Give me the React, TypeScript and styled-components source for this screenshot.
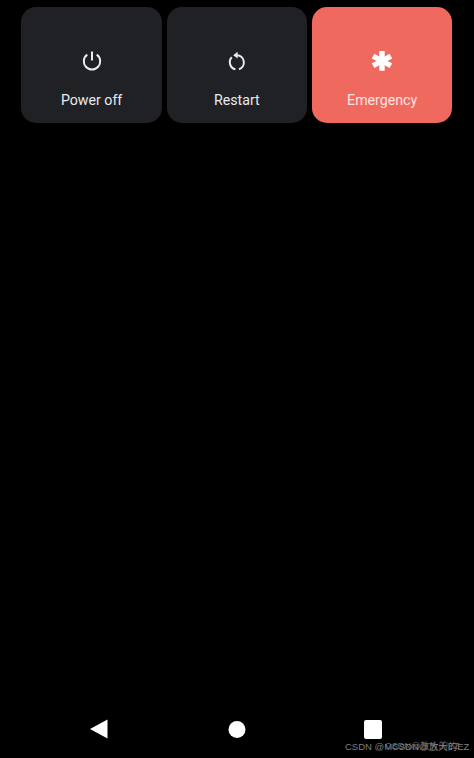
import React from "react";
import styled, { createGlobalStyle } from "styled-components";

const GlobalStyle = createGlobalStyle`
  html, body {
    margin: 0;
    padding: 0;
    background: #000;
  }
`;

const Screen = styled.div`
  position: relative;
  width: 474px;
  height: 758px;
  display: flex;
  flex-direction: column;
  justify-content: space-between;
  background: #000;
  font-family: Roboto, "Liberation Sans", sans-serif;
  overflow: hidden;
`;

const ActionRow = styled.div`
  display: flex;
  gap: 4.7px;
  padding: 7px 0 0 21.3px;
`;

const ActionCard = styled.div<{ $danger?: boolean }>`
  width: 140.6px;
  height: 116px;
  box-sizing: border-box;
  padding-top: 42px;
  display: flex;
  flex-direction: column;
  align-items: center;
  border-radius: 15px;
  background: ${({ $danger }) => ($danger ? "#f0695e" : "#202124")};
  color: ${({ $danger }) => ($danger ? "#fde4e1" : "#e8eaed")};
`;

const ActionIcon = styled.svg`
  width: 24px;
  height: 24px;
  display: block;
`;

const ActionLabel = styled.div`
  margin-top: 17px;
  font-size: 14.2px;
  line-height: 20px;
`;

const NavBar = styled.div`
  display: flex;
  align-items: center;
  height: 58px;
  padding-left: 89px;
`;

const NavSlot = styled.svg`
  width: 20px;
  height: 20px;
  display: block;
  fill: #fff;
`;

const HomeSlot = styled(NavSlot)`
  margin-left: 118px;
`;

const RecentSlot = styled(NavSlot)`
  margin-left: 116px;
`;

const Watermark = styled.div`
  position: absolute;
  left: 345px;
  bottom: 6px;
  font-family: "Liberation Sans", "Noto Sans CJK SC", sans-serif;
  font-size: 9.5px;
  line-height: 11px;
  color: #7f7f7f;
  white-space: nowrap;
`;

const WatermarkGhost = styled.span`
  position: absolute;
  left: 40px;
  top: 0;
  font-size: 9.2px;
  opacity: 0.8;
`;

export default function App() {
  return (
    <Screen>
      <GlobalStyle />
      <ActionRow>
        <ActionCard>
          <ActionIcon viewBox="0 0 24 24" fill="none" stroke="currentColor" strokeWidth="2">
            <path d="M12 2.5v9" />
            <path d="M7.3 5.6a8.2 8.2 0 1 0 9.4 0" />
          </ActionIcon>
          <ActionLabel>Power off</ActionLabel>
        </ActionCard>
        <ActionCard>
          <ActionIcon viewBox="0 0 24 24" fill="none" stroke="currentColor" strokeWidth="2">
            <path d="M12 6.2a7.2 7.2 0 0 1 2 14" />
            <path d="M10.4 20.3a7.2 7.2 0 0 1-3.6-12" />
            <path d="M12.6 2.8 8.2 6.2l4.4 3.4z" fill="currentColor" stroke="none" />
          </ActionIcon>
          <ActionLabel>Restart</ActionLabel>
        </ActionCard>
        <ActionCard $danger>
          <ActionIcon viewBox="0 0 24 24" fill="#fff">
            <path d="M9 2h6v6.2l5.4-3.1 3 5.2L18 13l5.4 2.7-3 5.2-5.4-3.1V24H9v-6.2l-5.4 3.1-3-5.2L6 13 .6 10.3l3-5.2L9 8.2z" transform="translate(1.2 0.2) scale(.9 .9)" />
          </ActionIcon>
          <ActionLabel>Emergency</ActionLabel>
        </ActionCard>
      </ActionRow>
      <NavBar>
        <NavSlot viewBox="0 0 20 20">
          <path d="M18.5 .5v19L1 10z" />
        </NavSlot>
        <HomeSlot viewBox="0 0 20 20">
          <circle cx="10" cy="10.5" r="8.5" />
        </HomeSlot>
        <RecentSlot viewBox="0 0 20 20">
          <rect x="1" y="1" width="18" height="19" rx="2" />
        </RecentSlot>
      </NavBar>
      <Watermark>
        CSDN @MCSDN@放大的EZ
        <WatermarkGhost>CSDN@放大的EZ</WatermarkGhost>
      </Watermark>
    </Screen>
  );
}
